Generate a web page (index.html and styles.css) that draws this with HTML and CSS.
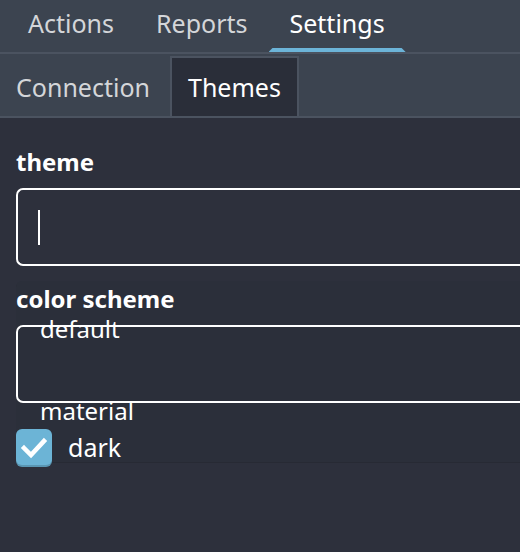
FILE: index.html
```html
<!DOCTYPE html>
<html>
<head>
<meta charset="utf-8">
<link rel="stylesheet" href="styles.css">
</head>
<body>
<div class="app">
  <nav class="topnav">
    <div class="tab">Actions</div>
    <div class="tab">Reports</div>
    <div class="tab active">Settings</div>
  </nav>
  <nav class="subnav">
    <div class="subtab">Connection</div>
    <div class="subtab active">Themes</div>
  </nav>
  <main class="content">
    <section class="field">
      <label class="label">theme</label>
      <div class="input"><span class="caret"></span></div>
    </section>
    <section class="group">
      <label class="label">color scheme</label>
      <div class="select">
        <div class="option first">default</div>
        <div class="select-box"></div>
        <div class="option">material</div>
      </div>
      <div class="check-row">
        <span class="checkbox">
          <svg viewBox="0 0 36 36" width="36" height="36"><path d="M8 19 L15 26 L28 12" fill="none" stroke="#fff" stroke-width="4.5" stroke-linecap="square"/></svg>
        </span>
        <span class="check-label">dark</span>
      </div>
    </section>
  </main>
</div>
</body>
</html>
```
FILE: styles.css
```css
html, body {
  margin: 0;
  padding: 0;
  background: #2d303c;
  overflow: hidden;
}
body {
  font-family: "Noto Sans", "Open Sans", sans-serif;
  color: #ffffff;
  width: 520px;
  height: 552px;
}
.app {
  width: 520px;
}
.topnav {
  display: flex;
  gap: 0;
  height: 52px;
  padding-left: 7px;
  background: #3c4450;
  border-bottom: 2px solid #4b5360;
}
.tab {
  position: relative;
  padding: 0 21px;
  font-size: 25px;
  line-height: 46px;
  color: #d4d6d9;
}
.tab.active {
  color: #ffffff;
}
.tab.active::after {
  content: "";
  position: absolute;
  left: 0;
  right: 0;
  bottom: 0;
  height: 4px;
  background: #6cb4d8;
  clip-path: polygon(4px 0, calc(100% - 4px) 0, 100% 100%, 0 100%);
}
.subnav {
  display: flex;
  gap: 4px;
  height: 62px;
  background: #3c4450;
  border-bottom: 2px solid #4b5360;
  align-items: flex-end;
}
.subtab {
  padding: 0 14px;
  font-size: 25px;
  line-height: 58px;
  height: 60px;
  color: #d4d6d9;
  box-sizing: border-box;
  border: 2px solid transparent;
  border-bottom: none;
}
.subtab.active {
  padding: 0 16px;
  background: #2a2e39;
  border-color: #4b5360;
  color: #ffffff;
}
.content {
  padding: 28px 0 0 16px;
}
.label {
  display: block;
  font-size: 24px;
  font-weight: 700;
  line-height: 32px;
}
.input {
  margin-top: 10px;
  height: 74px;
  border: 2px solid #ffffff;
  border-right: none;
  border-radius: 7px 0 0 7px;
  display: flex;
  align-items: center;
  padding-left: 20px;
}
.caret {
  width: 2px;
  height: 35px;
  background: #ffffff;
}
.group {
  margin-top: 15px;
  background: #2b2f3a;
  border-radius: 6px 0 0 6px;
  box-shadow: 0 1px 0 #272a34;
  height: 181px;
  position: relative;
}
.group .label {
  padding-top: 2px;
}
.select {
  position: relative;
  margin-top: 10px;
  height: 92px;
}
.select-box {
  height: 74px;
  border: 2px solid #ffffff;
  border-right: none;
  border-radius: 7px 0 0 7px;
}
.option {
  position: absolute;
  left: 24px;
  font-size: 24px;
  line-height: 30px;
  color: #ffffff;
}
.option.first {
  top: -11px;
}
.option:not(.first) {
  top: 71px;
}
.check-row {
  display: flex;
  align-items: center;
  gap: 16px;
  margin-top: 12px;
}
.checkbox {
  width: 36px;
  height: 36px;
  border-radius: 6px;
  background: #6cb4d6;
  box-shadow: 0 2px 0 #5a96b3;
  display: flex;
}
.check-label {
  font-size: 25px;
  line-height: 36px;
}
```
